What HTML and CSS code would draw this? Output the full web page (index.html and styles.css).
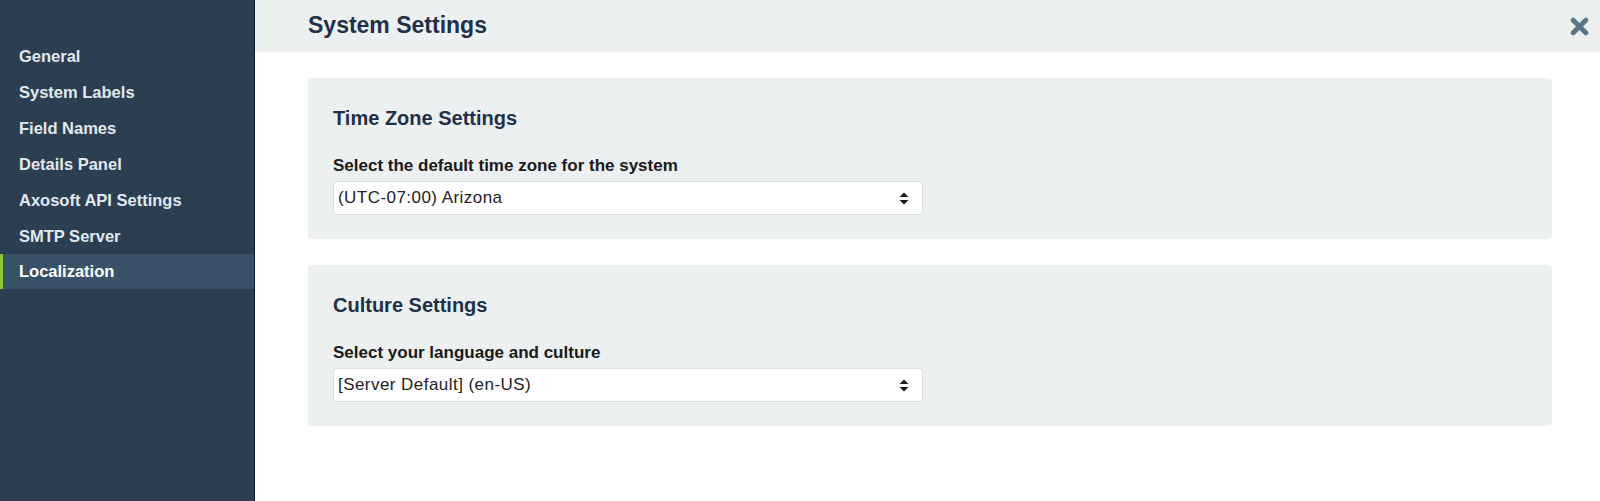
FILE: index.html
```html
<!DOCTYPE html>
<html>
<head>
<meta charset="utf-8">
<link rel="stylesheet" href="styles.css">
</head>
<body>
<div class="app">
  <nav class="sidebar">
    <ul class="nav">
      <li class="nav-item">General</li>
      <li class="nav-item">System Labels</li>
      <li class="nav-item">Field Names</li>
      <li class="nav-item">Details Panel</li>
      <li class="nav-item">Axosoft API Settings</li>
      <li class="nav-item">SMTP Server</li>
      <li class="nav-item active">Localization</li>
    </ul>
  </nav>
  <main class="main">
    <header class="header">
      <h1 class="title">System Settings</h1>
      <button class="close" aria-label="Close">
        <svg width="19" height="19" viewBox="0 0 19 19"><path d="M3.2 3.2 L15.8 15.8 M15.8 3.2 L3.2 15.8" stroke="#5b7689" stroke-width="5" stroke-linecap="round"/></svg>
      </button>
    </header>
    <div class="content">
      <section class="card">
        <h2 class="card-title">Time Zone Settings</h2>
        <label class="label">Select the default time zone for the system</label>
        <div class="select">
          <span class="select-text">(UTC-07:00) Arizona</span>
          <svg class="arrows" width="10" height="13" viewBox="0 0 10 13"><path d="M5 0.5 L9.5 5 L0.5 5 Z M0.5 8 L9.5 8 L5 12.5 Z" fill="#1d1d1d"/></svg>
        </div>
      </section>
      <section class="card">
        <h2 class="card-title">Culture Settings</h2>
        <label class="label">Select your language and culture</label>
        <div class="select">
          <span class="select-text">[Server Default] (en-US)</span>
          <svg class="arrows" width="10" height="13" viewBox="0 0 10 13"><path d="M5 0.5 L9.5 5 L0.5 5 Z M0.5 8 L9.5 8 L5 12.5 Z" fill="#1d1d1d"/></svg>
        </div>
      </section>
    </div>
  </main>
</div>
</body>
</html>
```

FILE: styles.css
```css
* { box-sizing: border-box; }
html, body { margin: 0; padding: 0; height: 100%; }
body {
  font-family: "Liberation Sans", Arial, Helvetica, sans-serif;
  background: #ffffff;
  color: #1e3148;
}
.app {
  display: flex;
  height: 501px;
}
.sidebar {
  width: 255px;
  flex: 0 0 255px;
  background: #2b3e52;
  border-right: 1px solid #0f1d2c;
}
.nav {
  list-style: none;
  margin: 0;
  padding: 38px 0 0 0;
}
.nav-item {
  height: 36px;
  display: flex;
  align-items: center;
  font-size: 16.5px;
  font-weight: bold;
  color: #e3e8ec;
  border-left: 3px solid transparent;
  padding-left: 16px;
}
.nav-item.active {
  background: #385169;
  border-left-color: #8cc63f;
  color: #ffffff;
  height: 35px;
}
.main {
  flex: 1;
  display: flex;
  flex-direction: column;
}
.header {
  height: 52px;
  background: #edf0f1;
  display: flex;
  align-items: center;
  justify-content: space-between;
  padding: 0 11px 0 53px;
}
.title {
  margin: 0;
  font-size: 23px;
  font-weight: bold;
  color: #1e3148;
  line-height: 28px;
  padding-bottom: 2px;
}
.close {
  background: none;
  border: 0;
  padding: 0;
  width: 19px;
  height: 19px;
  display: flex;
  margin-top: 1px;
}
.content {
  padding: 26px 48px 0 53px;
  display: flex;
  flex-direction: column;
  gap: 26px;
}
.card {
  background: #edf0f1;
  border-radius: 4px;
  padding: 28px 25px 24px 25px;
}
.card-title {
  margin: 0;
  font-size: 20px;
  font-weight: bold;
  color: #1e3148;
  line-height: 24px;
}
.label {
  display: block;
  margin-top: 26px;
  font-size: 17px;
  font-weight: bold;
  color: #1a1a1a;
  line-height: 20px;
}
.select {
  margin-top: 5px;
  width: 590px;
  height: 34px;
  background: #ffffff;
  border: 1px solid #d9e0e3;
  border-radius: 3px;
  display: flex;
  align-items: center;
  justify-content: space-between;
  padding: 0 13px 0 4px;
}
.select-text {
  font-size: 17px;
  letter-spacing: 0.45px;
  color: #222222;
}
.arrows { display: block; }
```
